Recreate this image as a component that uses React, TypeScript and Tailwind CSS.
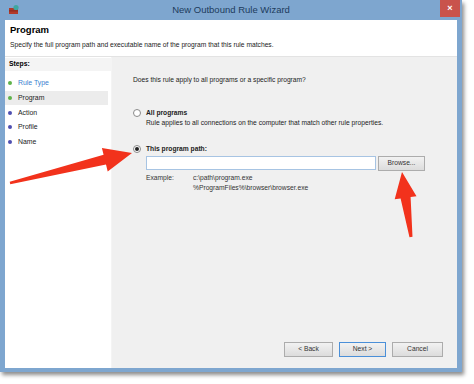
import React from "react";

const steps = [
  { name: "Rule Type", done: true, link: true },
  { name: "Program", done: true, current: true },
  { name: "Action" },
  { name: "Profile" },
  { name: "Name" },
];

const Btn = ({ label, focus }: { label: string; focus?: boolean }) => (
  <div
    className={`h-[15px] flex items-center justify-center text-[6.7px] text-[#333] bg-gradient-to-b from-[#f2f2f2] to-[#dcdcdc] border ${
      focus ? "border-[#4a8fd8]" : "border-[#acacac]"
    }`}
  >
    {label}
  </div>
);

const App = () => {
  return (
    <div className="relative w-[474px] h-[384px] bg-white overflow-hidden font-['Liberation_Sans',Arial,sans-serif]">
      {/* window */}
      <div className="w-[462px] h-[372px] bg-[#7ea6cf] flex flex-col px-[5px] pb-[4px] shadow-[2px_3px_4px_rgba(0,0,0,0.45)]">
        {/* title bar */}
        <div className="relative h-[20px] flex items-center justify-center shrink-0">
          <svg className="absolute left-[3px] top-[4px]" width="12" height="11" viewBox="0 0 12 11">
            <rect x="1" y="4" width="9" height="6" fill="#b23a2a" />
            <rect x="1" y="6.5" width="9" height="0.8" fill="#7a2218" />
            <circle cx="8" cy="3.5" r="2.6" fill="#3fa7a0" />
          </svg>
          <span className="text-[9.5px] text-[#1d3b5c]">New Outbound Rule Wizard</span>
          <div className="absolute right-[-3px] top-0 w-[20px] h-[17px] bg-[#c9534c] flex items-center justify-center text-white text-[9px] font-bold">
            ×
          </div>
        </div>

        {/* client */}
        <div className="flex-1 flex flex-col bg-white">
          <div className="h-[37px] shrink-0 px-[5px] pt-[4px] border-b border-[#e3e3e3]">
            <div className="text-[9.5px] font-bold text-black leading-[11px]">Program</div>
            <div className="mt-[6px] text-[6.7px] text-[#222] leading-[8px]">
              Specify the full program path and executable name of the program that this rule matches.
            </div>
          </div>

          <div className="flex-1 flex">
            {/* steps */}
            <div className="w-[107px] bg-white pt-[1px] border-r border-[#f4f4f4]">
              <div className="h-[13px] bg-[#f4f4f4] flex items-center pl-[4px] text-[6.8px] font-bold text-black">
                Steps:
              </div>
              <div className="mt-[5px] flex flex-col">
                {steps.map((s) => (
                  <div
                    key={s.name}
                    className={`h-[14.7px] flex items-center pl-[3px] mr-[3px] ${s.current ? "bg-[#ececec]" : ""}`}
                  >
                    <span
                      className={`w-[4px] h-[4px] rounded-full mr-[6px] ${
                        s.done ? "bg-[#5fb34a]" : "bg-[#4f4fb0]"
                      }`}
                    />
                    <span className={`text-[6.9px] ${s.link ? "text-[#3a7fd0]" : "text-[#222]"}`}>{s.name}</span>
                  </div>
                ))}
              </div>
            </div>

            {/* content */}
            <div className="flex-1 bg-[#f0f0f0] flex flex-col pl-[21px] pr-[14px] pt-[19px] pb-[11px] text-[6.7px] text-[#222]">
              <div className="leading-[8px]">Does this rule apply to all programs or a specific program?</div>

              <div className="mt-[25px] flex items-start">
                <span className="w-[8px] h-[8px] rounded-full border border-[#8a8a8a] bg-white shrink-0" />
                <div className="ml-[5px]">
                  <div className="font-bold leading-[8px]">All programs</div>
                  <div className="leading-[8px] mt-[2px]">
                    Rule applies to all connections on the computer that match other rule properties.
                  </div>
                </div>
              </div>

              <div className="mt-[18px] flex items-start">
                <span className="w-[8px] h-[8px] rounded-full border border-[#8a8a8a] bg-white shrink-0 flex items-center justify-center">
                  <span className="w-[4px] h-[4px] rounded-full bg-[#222]" />
                </span>
                <div className="ml-[5px] flex-1">
                  <div className="font-bold leading-[8px]">This program path:</div>
                  <div className="mt-[3px] flex gap-[2px]">
                    <div className="w-[230px] h-[14px] bg-white border border-[#a7c4e3]" />
                    <div className="w-[47px]">
                      <Btn label="Browse..." />
                    </div>
                  </div>
                  <div className="mt-[2px] flex leading-[10px] text-[#333]">
                    <div className="w-[47px]">Example:</div>
                    <div>
                      <div>c:\path\program.exe</div>
                      <div>%ProgramFiles%\browser\browser.exe</div>
                    </div>
                  </div>
                </div>
              </div>

              <div className="mt-auto flex justify-end gap-[6px]">
                <div className="w-[49px]">
                  <Btn label="< Back" />
                </div>
                <div className="w-[47px]">
                  <Btn label="Next >" focus />
                </div>
                <div className="w-[51px]">
                  <Btn label="Cancel" />
                </div>
              </div>
            </div>
          </div>
        </div>
      </div>

      {/* annotation arrows */}
      <svg className="absolute left-0 top-0 pointer-events-none" width="474" height="384" viewBox="0 0 474 384">
        <path d="M9.7 181.8 L103.6 154.8 L101.9 148 L132 153 L107.7 171.4 L106 164.6 L10.3 184.2 Z" fill="#f2321c" />
        <path d="M409.5 237.2 L400.6 198.5 L394.7 199.3 L402 172 L416.5 196.3 L410.6 197.1 L412.5 236.8 Z" fill="#f2321c" />
      </svg>
    </div>
  );
};

export default App;
